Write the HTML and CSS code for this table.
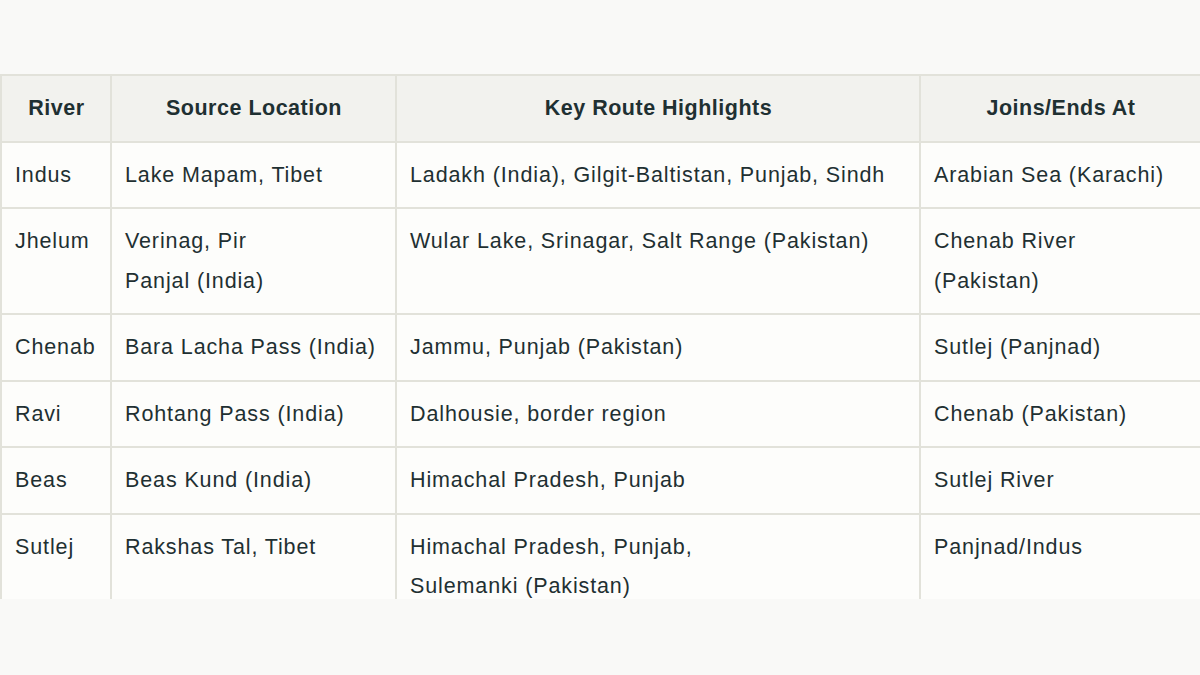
FILE: index.html
```html
<!DOCTYPE html>
<html>
<head>
<meta charset="utf-8">
<link rel="stylesheet" href="styles.css">
</head>
<body>
<div class="page">
  <div class="table-wrap">
    <table class="rivers">
      <colgroup>
        <col class="c1"><col class="c2"><col class="c3"><col class="c4">
      </colgroup>
      <thead>
        <tr><th>River</th><th>Source Location</th><th>Key Route Highlights</th><th>Joins/Ends At</th></tr>
      </thead>
      <tbody>
        <tr><td>Indus</td><td>Lake Mapam, Tibet</td><td>Ladakh (India), Gilgit-Baltistan, Punjab, Sindh</td><td>Arabian Sea (Karachi)</td></tr>
        <tr><td>Jhelum</td><td>Verinag, Pir<br>Panjal (India)</td><td>Wular Lake, Srinagar, Salt Range (Pakistan)</td><td>Chenab River<br>(Pakistan)</td></tr>
        <tr><td>Chenab</td><td>Bara Lacha Pass (India)</td><td>Jammu, Punjab (Pakistan)</td><td>Sutlej (Panjnad)</td></tr>
        <tr><td>Ravi</td><td>Rohtang Pass (India)</td><td>Dalhousie, border region</td><td>Chenab (Pakistan)</td></tr>
        <tr><td>Beas</td><td>Beas Kund (India)</td><td>Himachal Pradesh, Punjab</td><td>Sutlej River</td></tr>
        <tr><td>Sutlej</td><td>Rakshas Tal, Tibet</td><td>Himachal Pradesh, Punjab,<br>Sulemanki (Pakistan)</td><td>Panjnad/Indus</td></tr>
      </tbody>
    </table>
  </div>
</div>
</body>
</html>
```
FILE: styles.css
```css
html, body {
  margin: 0;
  padding: 0;
  background: #f9f9f7;
}
.page {
  width: 1200px;
  height: 675px;
  padding-top: 74px;
  box-sizing: border-box;
}
.table-wrap {
  width: 1200px;
  height: 525px;
  overflow: hidden;
}
.rivers {
  width: 1200px;
  border-collapse: collapse;
  table-layout: fixed;
  font-family: "Liberation Sans", Arial, sans-serif;
  font-size: 21.5px;
  letter-spacing: 0.88px;
  color: #1f3032;
  background: #fdfdfb;
}
.c1 { width: 110px; }
.c2 { width: 285px; }
.c3 { width: 524px; }
.c4 { width: 281px; }
.rivers th, .rivers td {
  border: 2px solid #e2e2da;
  padding: 13px 12px 12px 13px;
  line-height: 39.5px;
  vertical-align: top;
  text-align: left;
  font-weight: 400;
}
.rivers th {
  background: #f2f2ee;
  font-weight: 700;
  letter-spacing: 0.5px;
  text-align: center;
  line-height: 39.5px;
}
```
